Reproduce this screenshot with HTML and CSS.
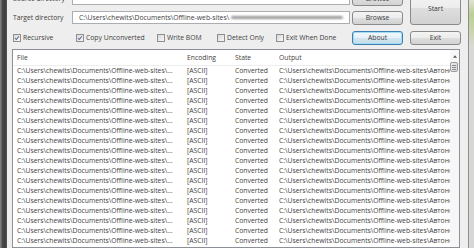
FILE: index.html
```html
<!DOCTYPE html>
<html lang="en">

<head>
    <meta charset="UTF-8">
    <meta name="viewport" content="width=device-width, initial-scale=1.0">
    <title>Encoding Converter</title>

    <link rel="stylesheet" href="styles.css">

</head>

<body>
    <div class="edgeL"></div>

    <div class="win">
        <div class="top">
            <label class="lbl">Source directory</label>
            <div class="field"><span class="smudge long"></span></div>
            <button class="btn">Browse</button>
            <button class="btn start">Start</button>

            <label class="lbl">Target directory</label>
            <div class="field">C:\Users\chewits\Documents\Offline-web-sites\<span class="smudge"></span></div>
            <button class="btn">Browse</button>

            <div class="checks">
                <span class="chk w1"><i class="box"><svg viewBox="0 0 8 8"><path d="M1.5 4.2 L3.2 6 L6.6 1.6" /></svg></i>Recursive</span>
                <span class="chk w2"><i class="box"><svg viewBox="0 0 8 8"><path d="M1.5 4.2 L3.2 6 L6.6 1.6" /></svg></i>Copy Unconverted</span>
                <span class="chk w3"><i class="box"></i>Write BOM</span>
                <span class="chk w4"><i class="box"></i>Detect Only</span>
                <span class="chk"><i class="box"></i>Exit When Done</span>
            </div>
            <button class="btn focus">About</button>
            <button class="btn">Exit</button>
        </div>

        <div class="list">
            <div class="cols">
                <div class="row hdr"><span class="c1">File</span><span class="c2">Encoding</span><span class="c3">State</span><span class="c4">Output</span></div>
                <div class="row"><span class="c1">C:\Users\chewits\Documents\Offline-web-sites\...</span><span class="c2">[ASCII]</span><span class="c3">Converted</span><span class="c4">C:\Users\chewits\Documents\Offline-web-sites\Автономные</span></div>
                <div class="row"><span class="c1">C:\Users\chewits\Documents\Offline-web-sites\...</span><span class="c2">[ASCII]</span><span class="c3">Converted</span><span class="c4">C:\Users\chewits\Documents\Offline-web-sites\Автономные</span></div>
                <div class="row"><span class="c1">C:\Users\chewits\Documents\Offline-web-sites\...</span><span class="c2">[ASCII]</span><span class="c3">Converted</span><span class="c4">C:\Users\chewits\Documents\Offline-web-sites\Автономные</span></div>
                <div class="row"><span class="c1">C:\Users\chewits\Documents\Offline-web-sites\...</span><span class="c2">[ASCII]</span><span class="c3">Converted</span><span class="c4">C:\Users\chewits\Documents\Offline-web-sites\Автономные</span></div>
                <div class="row"><span class="c1">C:\Users\chewits\Documents\Offline-web-sites\...</span><span class="c2">[ASCII]</span><span class="c3">Converted</span><span class="c4">C:\Users\chewits\Documents\Offline-web-sites\Автономные</span></div>
                <div class="row"><span class="c1">C:\Users\chewits\Documents\Offline-web-sites\...</span><span class="c2">[ASCII]</span><span class="c3">Converted</span><span class="c4">C:\Users\chewits\Documents\Offline-web-sites\Автономные</span></div>
                <div class="row"><span class="c1">C:\Users\chewits\Documents\Offline-web-sites\...</span><span class="c2">[ASCII]</span><span class="c3">Converted</span><span class="c4">C:\Users\chewits\Documents\Offline-web-sites\Автономные</span></div>
                <div class="row"><span class="c1">C:\Users\chewits\Documents\Offline-web-sites\...</span><span class="c2">[ASCII]</span><span class="c3">Converted</span><span class="c4">C:\Users\chewits\Documents\Offline-web-sites\Автономные</span></div>
                <div class="row"><span class="c1">C:\Users\chewits\Documents\Offline-web-sites\...</span><span class="c2">[ASCII]</span><span class="c3">Converted</span><span class="c4">C:\Users\chewits\Documents\Offline-web-sites\Автономные</span></div>
                <div class="row"><span class="c1">C:\Users\chewits\Documents\Offline-web-sites\...</span><span class="c2">[ASCII]</span><span class="c3">Converted</span><span class="c4">C:\Users\chewits\Documents\Offline-web-sites\Автономные</span></div>
                <div class="row"><span class="c1">C:\Users\chewits\Documents\Offline-web-sites\...</span><span class="c2">[ASCII]</span><span class="c3">Converted</span><span class="c4">C:\Users\chewits\Documents\Offline-web-sites\Автономные</span></div>
                <div class="row"><span class="c1">C:\Users\chewits\Documents\Offline-web-sites\...</span><span class="c2">[ASCII]</span><span class="c3">Converted</span><span class="c4">C:\Users\chewits\Documents\Offline-web-sites\Автономные</span></div>
                <div class="row"><span class="c1">C:\Users\chewits\Documents\Offline-web-sites\...</span><span class="c2">[ASCII]</span><span class="c3">Converted</span><span class="c4">C:\Users\chewits\Documents\Offline-web-sites\Автономные</span></div>
                <div class="row"><span class="c1">C:\Users\chewits\Documents\Offline-web-sites\...</span><span class="c2">[ASCII]</span><span class="c3">Converted</span><span class="c4">C:\Users\chewits\Documents\Offline-web-sites\Автономные</span></div>
                <div class="row"><span class="c1">C:\Users\chewits\Documents\Offline-web-sites\...</span><span class="c2">[ASCII]</span><span class="c3">Converted</span><span class="c4">C:\Users\chewits\Documents\Offline-web-sites\Автономные</span></div>
                <div class="row"><span class="c1">C:\Users\chewits\Documents\Offline-web-sites\...</span><span class="c2">[ASCII]</span><span class="c3">Converted</span><span class="c4">C:\Users\chewits\Documents\Offline-web-sites\Автономные</span></div>
                <div class="row"><span class="c1">C:\Users\chewits\Documents\Offline-web-sites\...</span><span class="c2">[ASCII]</span><span class="c3">Converted</span><span class="c4">C:\Users\chewits\Documents\Offline-web-sites\Автономные</span></div>
                <div class="row"><span class="c1">C:\Users\chewits\Documents\Offline-web-sites\...</span><span class="c2">[ASCII]</span><span class="c3">Converted</span><span class="c4">C:\Users\chewits\Documents\Offline-web-sites\Автономные</span></div>
                <div class="row"><span class="c1">C:\Users\chewits\Documents\Offline-web-sites\...</span><span class="c2">[ASCII]</span><span class="c3">Converted</span><span class="c4">C:\Users\chewits\Documents\Offline-web-sites\Автономные</span></div>
            </div>
            <div class="sbar">
                <div class="up"><svg viewBox="0 0 5 3"><path d="M0 3 L2.5 0 L5 3 Z" /></svg></div>
                <div class="thumb"><i></i><i></i><i></i></div>
            </div>
        </div>
    </div>

    <div class="edgeR"></div>
</body>

</html>
```

FILE: styles.css
```css
* {
    font-family: 'Open Sans', 'Noto Sans', sans-serif;
    padding: 0px;
    box-sizing: border-box;
    margin: 0px;
}

body {
    display: flex;
    width: 474px;
    height: 248px;
    overflow: hidden;
    background-color: #eeeeee;
    color: #424242;
    font-size: 6.8px;
}

.edgeL {
    width: 7px;
    flex-shrink: 0;
    background: linear-gradient(90deg, #8a8a8a 0, #4a4a4a 35%, #3b3b3b 70%, #585858 100%);
}

.win {
    width: 461px;
    flex-shrink: 0;
    display: flex;
    flex-direction: column;
    padding: 0 7px 0 5px;
    background-color: #eeeeee;
}

.edgeR {
    flex: 1;
    border-left: 1px solid #8e8e8e;
    background: linear-gradient(180deg, #dfe3d6 0, #bccf92 14px, #c8d4ab 30px, #d8d9d4 46px, #d6d6d6 100%);
}

.top {
    display: grid;
    grid-template-columns: 60px 280px 58px 51px;
    grid-template-rows: 13px 13px 15px;
    row-gap: 6px;
    margin-top: -8px;
}

.lbl {
    align-self: center;
    padding-left: 1px;
    white-space: nowrap;
}

.field {
    width: 278px;
    height: 13px;
    border: 1px solid #abadb3;
    background: #fff;
    padding-left: 6px;
    line-height: 11px;
    white-space: nowrap;
    overflow: hidden;
    display: flex;
    align-items: center;
}

.smudge {
    display: inline-block;
    height: 3px;
    width: 112px;
    margin-left: 2px;
    background: #9a9a9a;
    border-radius: 2px;
    filter: blur(0.8px);
}

.smudge.long {
    width: 262px;
    margin-left: 0;
    margin-top: -6px;
}

.btn {
    width: 51px;
    height: 14px;
    align-self: center;
    border: 1px solid #8a8a8a;
    border-radius: 3px;
    background: linear-gradient(180deg, #f4f4f4 0, #ececec 50%, #dedede 50%, #d2d2d2 100%);
    color: #3a3a3a;
    font: inherit;
}

.start {
    grid-row: 1 / span 2;
    grid-column: 4;
    height: 33px;
    align-self: end;
    margin-bottom: -1px;
}

.focus {
    border-color: #3c7fb1;
    box-shadow: inset 0 0 0 1px #a6dcf3;
    background: linear-gradient(180deg, #f1f8fc 0, #e6f1f7 50%, #d2e6f0 50%, #c6dde9 100%);
}

.checks {
    grid-column: 1 / span 2;
    display: flex;
    align-items: center;
    white-space: nowrap;
}

.chk {
    display: flex;
    align-items: center;
}

.w1 {
    width: 63px;
}

.w2 {
    width: 81px;
}

.w3 {
    width: 60px;
}

.w4 {
    width: 59px;
}

.box {
    width: 8px;
    height: 8px;
    margin: 0 2px 0 1px;
    border: 1px solid #8f8f8f;
    background: linear-gradient(135deg, #d8d8d8, #f8f8f8);
    display: flex;
}

.box svg {
    width: 6px;
    height: 6px;
    fill: none;
    stroke: #57698f;
    stroke-width: 1.4;
}

.list {
    flex: 1;
    margin-top: 4px;
    margin-right: 1px;
    border: 1px solid #8c9098;
    background: #fff;
    display: flex;
    overflow: hidden;
}

.cols {
    flex: 1;
    overflow: hidden;
}

.row {
    display: flex;
    height: 10px;
    line-height: 10px;
    white-space: nowrap;
}

.hdr {
    height: 16px;
    line-height: 15px;
    border-bottom: 1px solid #ededed;
}

.c1 {
    width: 174px;
    padding-left: 4px;
    flex-shrink: 0;
    overflow: hidden;
}

.c2 {
    width: 48px;
    flex-shrink: 0;
}

.c3 {
    width: 44px;
    flex-shrink: 0;
}

.c4 {
    flex: 1;
    overflow: hidden;
}

.sbar {
    width: 9px;
    flex-shrink: 0;
    background: #f6f6f6;
}

.up {
    height: 12px;
    display: flex;
    justify-content: center;
    align-items: center;
}

.up svg {
    width: 4px;
    height: 3px;
    fill: #555;
}

.thumb {
    height: 10px;
    margin: 0 1px 0 0;
    border: 1px solid #9c9c9c;
    border-radius: 2px;
    background: linear-gradient(90deg, #eaeaea, #dcdcdc);
    display: flex;
    flex-direction: column;
    justify-content: center;
    align-items: center;
    gap: 1px;
}

.thumb i {
    width: 4px;
    height: 1px;
    background: #8a8a8a;
}
```
